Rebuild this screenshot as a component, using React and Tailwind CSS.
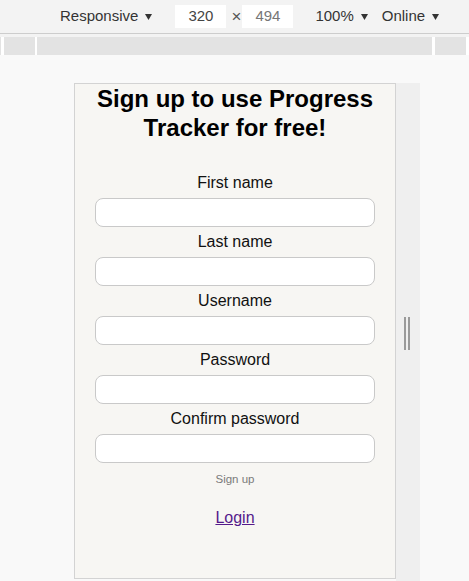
import React from "react";

const font = { fontFamily: '"Liberation Sans", Arial, sans-serif' };

function Caret() {
  return (
    <svg width="7" height="6" viewBox="0 0 7 6" className="ml-[7px]">
      <polygon points="0,0 7,0 3.5,6" fill="#333" />
    </svg>
  );
}

function Field({ label, type = "text" }) {
  return (
    <div className="flex flex-col items-center">
      <label className="my-[6px] text-[16px] leading-[18px] text-[#111]">{label}</label>
      <input
        type={type}
        className="w-[280px] h-[29px] rounded-[8px] border border-[#c9c9c9] bg-white px-2 outline-none"
      />
    </div>
  );
}

export default function App() {
  return (
    <div className="w-[469px] h-[581px] overflow-hidden bg-[#f9f9f9]" style={font}>
      {/* devtools toolbar */}
      <div className="h-[34px] bg-[#f3f3f3] border-b border-[#cdcdcd] flex items-center pl-[60px] text-[15px] text-[#333]">
        <span>Responsive</span>
        <Caret />
        <div className="ml-[23px] w-[51px] h-[23px] bg-white flex items-center justify-center text-[#444]">320</div>
        <span className="ml-[4px] w-[12px] text-center text-[17px] text-[#555]">×</span>
        <div className="w-[51px] h-[23px] bg-white flex items-center justify-center text-[#777]">494</div>
        <span className="ml-[22px]">100%</span>
        <Caret />
        <span className="ml-[14px]">Online</span>
        <Caret />
      </div>
      <div className="h-[3px] bg-[#f3f3f3]" />
      <div className="h-[18px] flex bg-white">
        <div className="w-[1px] bg-[#e3e3e3]" />
        <div className="ml-[3px] w-[31px] bg-[#e3e3e3]" />
        <div className="ml-[2px] w-[395px] bg-[#e3e3e3]" />
        <div className="ml-[3px] w-[31px] bg-[#e3e3e3]" />
      </div>

      {/* viewport */}
      <div className="flex pl-[74px] pt-[28px]">
        <div className="w-[322px] h-[496px] border border-[#d3d3d3] bg-[#f7f6f3] flex flex-col items-center">
          <h1 className="text-[24px] leading-[29px] font-bold text-black text-center">
            Sign up to use Progress
            <br />
            Tracker for free!
          </h1>
          <form className="pt-[26px] flex flex-col items-center">
            <Field label="First name" />
            <Field label="Last name" />
            <Field label="Username" />
            <Field label="Password" type="password" />
            <Field label="Confirm password" type="password" />
            <button type="button" className="mt-[10px] text-[11.5px] leading-[13px] text-[#7a7a7a] bg-transparent">
              Sign up
            </button>
            <a href="#" className="mt-[23px] text-[16px] leading-[18px] text-[#551a8b] underline">
              Login
            </a>
          </form>
        </div>
        <div className="w-[24px] h-[500px] bg-[#efefef] flex items-center pl-[8px] gap-[2px]">
          <div className="w-[2px] h-[33px] bg-[#9a9a9a]" />
          <div className="w-[2px] h-[33px] bg-[#9a9a9a]" />
        </div>
      </div>
    </div>
  );
}
